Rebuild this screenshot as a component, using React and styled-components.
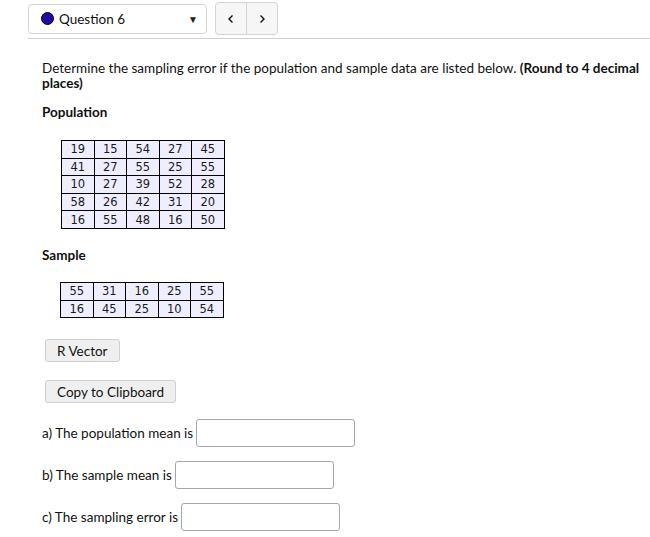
import styled, { createGlobalStyle } from "styled-components";

const GlobalStyle = createGlobalStyle`
  body {
    margin: 0;
    background: #fff;
    font-family: Lato, "Open Sans", sans-serif;
    color: #111;
  }
`;

const population = [
  [19, 15, 54, 27, 45],
  [41, 27, 55, 25, 55],
  [10, 27, 39, 52, 28],
  [58, 26, 42, 31, 20],
  [16, 55, 48, 16, 50],
];

const sample = [
  [55, 31, 16, 25, 55],
  [16, 45, 25, 10, 54],
];

const Page = styled.div`
  width: 650px;
`;

const Header = styled.div`
  display: flex;
  align-items: center;
  gap: 8px;
  margin-left: 28px;
  padding-top: 2px;
  padding-bottom: 3px;
  border-bottom: 1px solid #d0d0d0;
`;

const Select = styled.div`
  box-sizing: border-box;
  width: 179px;
  height: 30px;
  border: 1px solid #d4d4d4;
  border-radius: 4px;
  display: flex;
  align-items: center;
  padding: 0 8px 0 12px;
  font-size: 13.5px;
  color: #111;
`;

const Dot = styled.span`
  width: 11px;
  height: 11px;
  border-radius: 50%;
  background: #1f0aa6;
  border: 1px solid #000;
  margin-right: 5px;
`;

const Caret = styled.span`
  margin-left: auto;
  font-size: 10px;
  color: #222;
`;

const NavGroup = styled.div`
  display: flex;
  height: 31px;
  border: 1px solid #d4d4d4;
  border-radius: 4px;
  background: #f6f6f6;
  overflow: hidden;
`;

const NavButton = styled.div`
  width: 30px;
  display: flex;
  align-items: center;
  justify-content: center;
  border-left: ${(p) => (p.$divider ? "1px solid #d4d4d4" : "none")};
`;

const Content = styled.div`
  padding: 22px 0 0 42px;
  font-size: 13.5px;
`;

const Prompt = styled.p`
  margin: 0;
  line-height: 15px;
  padding-right: 4px;
`;

const Heading = styled.div`
  font-weight: bold;
  margin: ${(p) => p.$top}px 0 0 0;
  line-height: 16px;
`;

const DataTable = styled.table`
  border-collapse: collapse;
  margin: ${(p) => p.$top}px 0 0 ${(p) => p.$left}px;
  background: #eeeeff;
  font-family: "DejaVu Sans", sans-serif;
  font-size: 11.5px;
  color: #1a1a1a;
  td {
    border: 1px solid #000;
    width: 31.5px;
    height: 16.6px;
    padding: 0;
    text-align: center;
    line-height: 16px;
  }
`;

const Button = styled.button`
  display: block;
  box-sizing: border-box;
  height: 23px;
  margin: ${(p) => p.$top}px 0 0 3px;
  padding: 0 11px;
  font-family: inherit;
  font-size: 13.5px;
  color: #111;
  background: #efefef;
  border: 1px solid #cfcfcf;
  border-radius: 3px;
`;

const Row = styled.div`
  display: flex;
  align-items: center;
  margin-top: ${(p) => p.$top}px;
`;

const Input = styled.input`
  box-sizing: border-box;
  width: 159px;
  height: 28px;
  margin-left: 3px;
  border: 1px solid #a8a8a8;
  border-radius: 3px;
`;

const Chevron = ({ dir }) => (
  <svg width="10" height="10" viewBox="0 0 10 10">
    <path
      d={dir === "left" ? "M6.5 1.5 L3 5 L6.5 8.5" : "M3.5 1.5 L7 5 L3.5 8.5"}
      fill="none"
      stroke="#111"
      strokeWidth="1.4"
    />
  </svg>
);

const Table = ({ rows, top, left }) => (
  <DataTable $top={top} $left={left}>
    <tbody>
      {rows.map((r, i) => (
        <tr key={i}>
          {r.map((v, j) => (
            <td key={j}>{v}</td>
          ))}
        </tr>
      ))}
    </tbody>
  </DataTable>
);

export default function App() {
  return (
    <Page>
      <GlobalStyle />
      <Header>
        <Select>
          <Dot />
          Question 6
          <Caret>▼</Caret>
        </Select>
        <NavGroup>
          <NavButton>
            <Chevron dir="left" />
          </NavButton>
          <NavButton $divider>
            <Chevron dir="right" />
          </NavButton>
        </NavGroup>
      </Header>
      <Content>
        <Prompt>
          Determine the sampling error if the population and sample data are
          listed below. <b>(Round to 4 decimal places)</b>
        </Prompt>
        <Heading $top={13}>Population</Heading>
        <Table rows={population} top={20} left={19} />
        <Heading $top={18}>Sample</Heading>
        <Table rows={sample} top={19} left={18} />
        <Button $top={21}>R Vector</Button>
        <Button $top={18}>Copy to Clipboard</Button>
        <Row $top={16}>
          a) The population mean is <Input />
        </Row>
        <Row $top={14}>
          b) The sample mean is <Input />
        </Row>
        <Row $top={14}>
          c) The sampling error is <Input />
        </Row>
      </Content>
    </Page>
  );
}
